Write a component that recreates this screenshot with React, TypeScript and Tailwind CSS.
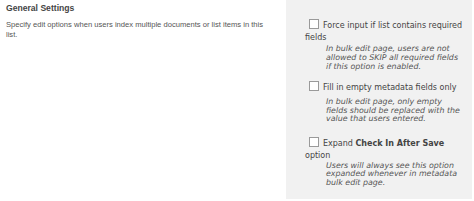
import React from "react";

function Box() {
  return (
    <span className="inline-block w-[10px] h-[10px] border border-[#9a9a9a] bg-white align-[-1px] ml-[4px] mr-[4px]" />
  );
}

export default function App() {
  return (
    <div className="flex w-[474px] h-[201px] bg-white">
      <div className="w-[286px] pl-[6px] pt-[2px] font-['Liberation_Sans',sans-serif] text-[#444]">
        <div className="text-[8.6px] font-bold leading-[12px]">General Settings</div>
        <div className="mt-[6px] text-[7.6px] leading-[10px] text-[#555] w-[262px]">
          Specify edit options when users index multiple documents or list items in this list.
        </div>
      </div>
      <div className="w-[186px] h-[199px] bg-[#f1f1f1] pl-[19px] pr-[6px] pt-[19px] font-['DejaVu_Sans',sans-serif] text-[#444]">
        <div className="text-[8px] leading-[12px]">
          <Box />Force input if list contains required fields
        </div>
        <div className="pl-[21px] pr-[4px] text-[7.9px] leading-[9px] italic text-[#555]">
          In bulk edit page, users are not allowed to SKIP all required fields if this option is enabled.
        </div>
        <div className="mt-[10px] text-[8px] leading-[12px]">
          <Box />Fill in empty metadata fields only
        </div>
        <div className="mt-[4px] pl-[21px] pr-[4px] text-[7.9px] leading-[8.5px] italic text-[#555]">
          In bulk edit page, only empty fields should be replaced with the value that users entered.
        </div>
        <div className="mt-[13px] text-[8px] leading-[12px]">
          <Box />Expand <b>Check In After Save</b> option
        </div>
        <div className="pl-[21px] pr-[4px] text-[7.9px] leading-[8.5px] italic text-[#555]">
          Users will always see this option expanded whenever in metadata bulk edit page.
        </div>
      </div>
    </div>
  );
}
